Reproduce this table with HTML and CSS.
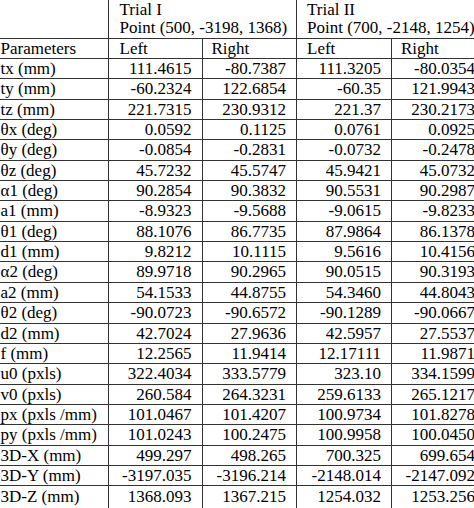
FILE: index.html
```html
<!DOCTYPE html>
<html>
<head>
<meta charset="utf-8">
<link rel="stylesheet" href="styles.css">
</head>
<body>
<div class="frame">
<table class="data">
  <colgroup>
    <col class="c-param">
    <col class="c-val">
    <col class="c-val2">
    <col class="c-val3">
    <col class="c-val4">
  </colgroup>
  <thead>
    <tr class="trial-row">
      <th class="blank"></th>
      <th class="trial" colspan="2">Trial I<br>Point (500, -3198, 1368)</th>
      <th class="trial t2" colspan="2">Trial II<br>Point (700, -2148, 1254)</th>
    </tr>
  </thead>
  <tbody>
    <tr><td class="p">Parameters</td><td class="side">Left</td><td class="side r">Right</td><td class="side t2">Left</td><td class="side r">Right</td></tr>
    <tr><td class="p">tx (mm)</td><td>111.4615</td><td>-80.7387</td><td>111.3205</td><td>-80.0354</td></tr>
    <tr><td class="p">ty (mm)</td><td>-60.2324</td><td>122.6854</td><td>-60.35</td><td>121.9943</td></tr>
    <tr><td class="p">tz (mm)</td><td>221.7315</td><td>230.9312</td><td>221.37</td><td>230.2173</td></tr>
    <tr><td class="p">θx (deg)</td><td>0.0592</td><td>0.1125</td><td>0.0761</td><td>0.0925</td></tr>
    <tr><td class="p">θy (deg)</td><td>-0.0854</td><td>-0.2831</td><td>-0.0732</td><td>-0.2478</td></tr>
    <tr><td class="p">θz (deg)</td><td>45.7232</td><td>45.5747</td><td>45.9421</td><td>45.0732</td></tr>
    <tr><td class="p">α1 (deg)</td><td>90.2854</td><td>90.3832</td><td>90.5531</td><td>90.2987</td></tr>
    <tr><td class="p">a1 (mm)</td><td>-8.9323</td><td>-9.5688</td><td>-9.0615</td><td>-9.8233</td></tr>
    <tr><td class="p">θ1 (deg)</td><td>88.1076</td><td>86.7735</td><td>87.9864</td><td>86.1378</td></tr>
    <tr><td class="p">d1 (mm)</td><td>9.8212</td><td>10.1115</td><td>9.5616</td><td>10.4156</td></tr>
    <tr><td class="p">α2 (deg)</td><td>89.9718</td><td>90.2965</td><td>90.0515</td><td>90.3193</td></tr>
    <tr><td class="p">a2 (mm)</td><td>54.1533</td><td>44.8755</td><td>54.3460</td><td>44.8043</td></tr>
    <tr><td class="p">θ2 (deg)</td><td>-90.0723</td><td>-90.6572</td><td>-90.1289</td><td>-90.0667</td></tr>
    <tr><td class="p">d2 (mm)</td><td>42.7024</td><td>27.9636</td><td>42.5957</td><td>27.5537</td></tr>
    <tr><td class="p">f (mm)</td><td>12.2565</td><td>11.9414</td><td>12.17111</td><td>11.9871</td></tr>
    <tr><td class="p">u0 (pxls)</td><td>322.4034</td><td>333.5779</td><td>323.10</td><td>334.1599</td></tr>
    <tr><td class="p">v0 (pxls)</td><td>260.584</td><td>264.3231</td><td>259.6133</td><td>265.1217</td></tr>
    <tr><td class="p">px (pxls /mm)</td><td>101.0467</td><td>101.4207</td><td>100.9734</td><td>101.8278</td></tr>
    <tr><td class="p">py (pxls /mm)</td><td>101.0243</td><td>100.2475</td><td>100.9958</td><td>100.0450</td></tr>
    <tr><td class="p">3D-X (mm)</td><td>499.297</td><td>498.265</td><td>700.325</td><td>699.654</td></tr>
    <tr><td class="p">3D-Y (mm)</td><td>-3197.035</td><td>-3196.214</td><td>-2148.014</td><td>-2147.092</td></tr>
    <tr class="last"><td class="p">3D-Z (mm)</td><td>1368.093</td><td>1367.215</td><td>1254.032</td><td>1253.256</td></tr>
  </tbody>
</table>
</div>
</body>
</html>
```

FILE: styles.css
```css
html, body {
  margin: 0;
  padding: 0;
  background: #ffffff;
}

.frame {
  width: 474px;
  height: 508px;
  overflow: hidden;
}

.data {
  border-collapse: collapse;
  table-layout: fixed;
  width: 496.5px;
  margin-left: -11.5px;
  font-family: "Liberation Serif", "Times New Roman", serif;
  font-size: 17px;
  color: #000;
}

.c-param { width: 119px; }
.c-val { width: 94px; }
.c-val2 { width: 94.5px; }
.c-val3 { width: 95px; }
.c-val4 { width: 94px; }

.data th,
.data td {
  border: 1px solid #333333;
  padding: 0;
  white-space: nowrap;
}

.trial-row {
  height: 38px;
}

.data th {
  border-top: none;
  font-weight: normal;
  text-align: left;
  vertical-align: top;
  line-height: 18px;
  padding: 1px 0 0 11px;
}

.data th.t2 {
  padding-left: 10px;
}

.data tbody tr {
  height: 20.36px;
}

.data td {
  line-height: 19px;
  text-align: right;
  vertical-align: top;
  padding-right: 10px;
  overflow: hidden;
}

.data td.p {
  text-align: left;
  padding-left: 11px;
  padding-right: 0;
}

.data td.side {
  text-align: left;
  padding-left: 11px;
  padding-right: 0;
}

.data td.side.t2 {
  padding-left: 10px;
}

.data td.side.r {
  padding-left: 9px;
}

.data tbody tr.last {
  height: 28px;
}

.data tr.last td {
  padding-top: 1px;
}
```
